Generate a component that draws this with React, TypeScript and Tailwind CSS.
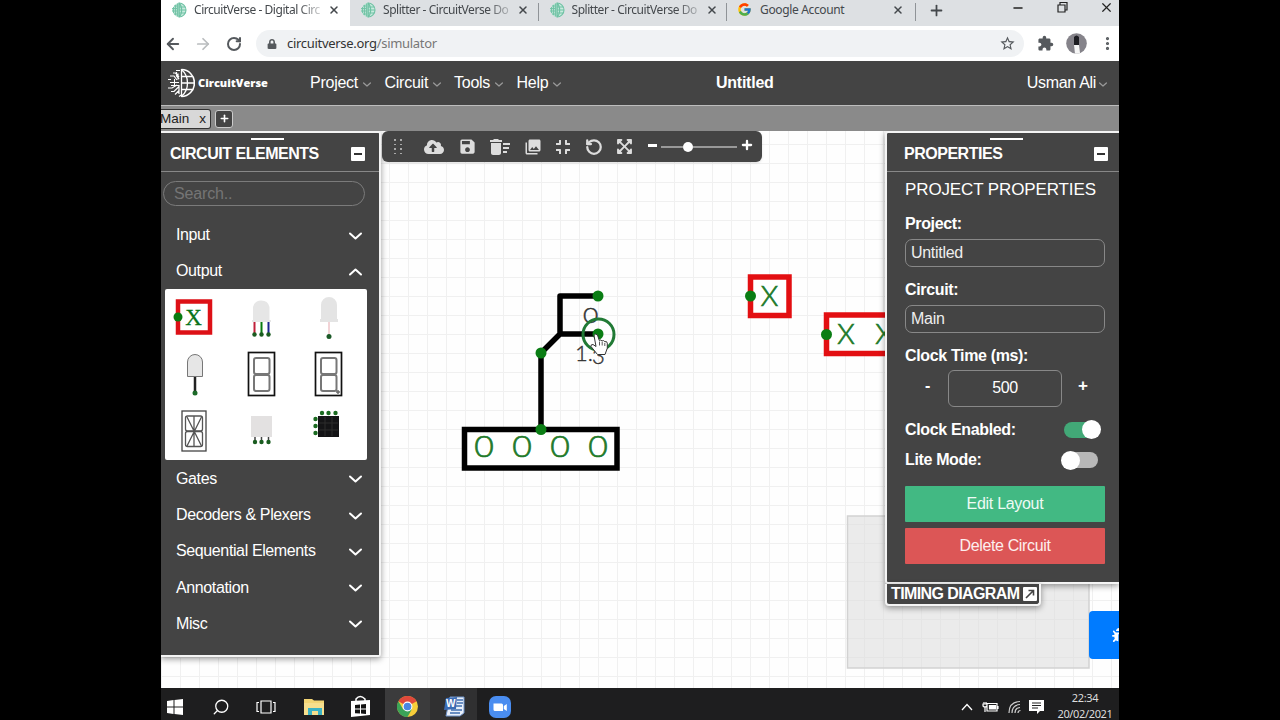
import React from 'react';
import { ArrowLeft, ArrowRight, Minus, MoreVertical, Plus, RotateCcw, RotateCw, Search, X } from 'lucide-react';
import { FaBug, FaCloudUploadAlt, FaCompress, FaExpandArrowsAlt, FaLock } from 'react-icons/fa';
import { FcGoogle } from 'react-icons/fc';
import { MdDeleteSweep, MdExtension, MdPhotoLibrary, MdSave, MdStarBorder } from 'react-icons/md';

const TABS = [
  { title: 'CircuitVerse - Digital Circ', active: true },
  { title: 'Splitter - CircuitVerse Do', active: false },
  { title: 'Splitter - CircuitVerse Do', active: false },
  { title: 'Google Account', active: false, google: true },
];

const MENUS = [
  { label: 'Project', width: 'w-[74.5px]' },
  { label: 'Circuit', width: 'w-[69.5px]' },
  { label: 'Tools', width: 'w-[62.5px]' },
  { label: 'Help', width: 'w-[60px]' },
];

const LOWER_SECTIONS = ['Gates', 'Decoders & Plexers', 'Sequential Elements', 'Annotation', 'Misc'];

const GlobeIcon = () => (
  <svg width="16" height="16" viewBox="0 0 16 16" fill="none" stroke="#6fc2a4" strokeWidth="1.1" className="shrink-0">
    <path d="M8 1a7 7 0 0 1 0 14z" fill="#c9ebdf" />
    <path d="M3.500 3Q8 0 8 1v14q-3 0-5-2.500L1 8z" fill="#b5e0d1" stroke="none" />
    <path d="M8 1v14M8 1c3.6 3.5 3.6 10.500 0 14M8 5h6.200M8 8h7M8 11h6.200" />
    <path d="M6.500 1.500v13M4.500 3v10M2.500 5v6M1 6.500h5M1 9h5M3 4h3M3 12h3" strokeWidth="0.900" />
  </svg>
);

// Small shallow arrow used in menus and accordions
const Chevron: React.FC<{ up?: boolean; small?: boolean; className?: string }> = ({ up, small, className = '' }) => (
  <svg
    width={small ? 8 : 13}
    height={small ? 5 : 8}
    viewBox="0 0 13 8"
    fill="none"
    stroke="currentColor"
    strokeWidth="2"
    strokeLinecap="round"
    strokeLinejoin="round"
    className={`shrink-0 ${up ? 'rotate-180' : ''} ${className}`}
  >
    <path d="M1 1.500l5.500 5 5.500-5" />
  </svg>
);

const Logo = () => (
  <svg width="28" height="30" viewBox="0 0 28 30" fill="none" stroke="#fff" strokeWidth="1.200">
    <path d="M14.500 1.500a12.700 13.300 0 0 1 0 27" strokeWidth="1.600" />
    <path d="M14.500 1v28M14.500 1.500c8 7 8 20 0 27M14.500 8.500h10.500M14.500 15h12.500M14.500 21.500h10.500" strokeWidth="1.300" />
    <path d="M11 5.500v6M12 17v9M9.500 4v4l2.500 3M9 2.500h4M6 5h2.500l3.500 4M3 8h4l3 4M1 11.500h3M3 14.500h9M4 17.500h8M1 20h4l5-3M4 23.500h3l5-5M8 26.500l4-4M12 28.500l3-2" />
    <path d="M7.500 11v8" strokeWidth="1" />
  </svg>
);

const BrowserTabs: React.FC = () => (
  <div className="flex h-[26px] shrink-0 bg-[#dde0e3] font-['Noto_Sans',sans-serif] text-[#44484c]">
    {TABS.map((tab, i) => (
      <div
        key={i}
        className={`flex h-[26px] items-start pt-[2px] pl-[10px] ${tab.active ? 'w-[189px] bg-white' : 'w-[188.500px]'}`}
      >
        {tab.google ? <FcGoogle size={15} className="shrink-0" /> : <GlobeIcon />}
        {tab.google ? (
          <span className="ml-[8px] h-4 w-[128px] text-[12px] leading-4 tracking-[-0.350px] whitespace-nowrap">{tab.title}</span>
        ) : (
          <span className="ml-[7px] h-4 w-[130px] text-[12px] leading-4 tracking-[-0.450px] whitespace-nowrap [mask-image:linear-gradient(to_right,black_104px,transparent_134px)]">
            {tab.title}
          </span>
        )}
        <X size={12} strokeWidth={3} className="mt-[2px] ml-1 shrink-0" />
        {!tab.active && <span className="mt-px ml-auto h-[18px] w-px bg-[#8f9397]" />}
      </div>
    ))}
    <Plus size={17} strokeWidth={2.500} className="mt-[2px] ml-[12px]" />
    <div className="ml-auto flex gap-[33px] pt-[1px] pr-[5px] text-[#222]">
      <Minus size={14} strokeWidth={2.200} className="-mr-[1px]" />
      <svg width="11" height="12" viewBox="0 0 11 12" fill="none" stroke="#222" strokeWidth="1.200">
        <path d="M1 4h7v7H1zM3 4V1.500h7V9H8" />
      </svg>
      <X size={15} strokeWidth={1.900} className="-mt-px -ml-[2px]" />
    </div>
  </div>
);

const AddressBar: React.FC = () => (
  <div className="flex h-[35px] shrink-0 items-center bg-white pl-[3px] text-[#55595d]">
    <ArrowLeft size={18} strokeWidth={2.500} />
    <ArrowRight size={18} strokeWidth={2.300} className="ml-[12px] text-[#b9bcbe]" />
    <RotateCw size={16} strokeWidth={3} className="ml-[14px]" />
    <div className="ml-[14px] flex h-[27px] w-[768px] items-center rounded-full bg-[#f0f2f4] pr-[8px] pl-[11px]">
      <FaLock size={10} />
      <span className="ml-[10px] font-['Noto_Sans',sans-serif] text-[13px] tracking-[-0.300px] text-[#777]">
        <span className="text-[#333]">circuitverse.org</span>/simulator
      </span>
      <MdStarBorder size={17} className="ml-auto" />
    </div>
    <MdExtension size={17} className="ml-[13px]" />
    <svg width="21" height="21" viewBox="0 0 21 21" className="ml-[12px]">
      <circle cx="10.500" cy="10.500" r="10.300" fill="#85838a" />
      <path d="M8 4q2.500-3 5 0v8H8z" fill="#1d1d22" />
      <path d="M8 12h5l1 8q-3 1-5 .5z" fill="#f5f5f5" />
    </svg>
    <MoreVertical size={17} strokeWidth={2.500} className="ml-[12px]" />
  </div>
);

const NavBar: React.FC = () => (
  <div className="flex h-[45px] shrink-0 items-center border-b border-[#bdbdbd] bg-[#444] text-[16px] tracking-[-0.250px] text-white">
    <div className="flex w-[149px] items-center pl-[6px]">
      <Logo />
      <span className="ml-[3px] font-['Open_Sans',sans-serif] text-[11px] font-extrabold tracking-normal">CircuitVerse</span>
    </div>
    {MENUS.map((menu) => (
      <div key={menu.label} className={`flex items-center gap-[5px] ${menu.width}`}>
        {menu.label}
        <Chevron small className="mt-[3px] text-[#999]" />
      </div>
    ))}
    <span className="ml-[139.500px] font-bold">Untitled</span>
    <div className="ml-auto flex items-center gap-[3px] pr-[12px]">
      <span className="-mt-px tracking-[-0.320px]">Usman Ali</span>
      <Chevron small className="mt-[3px] text-[#999]" />
    </div>
  </div>
);

const CircuitTabs: React.FC = () => (
  <div className="flex h-[25px] shrink-0 items-center gap-[4px] bg-[#8a8a8a] text-[13.500px]">
    <div className="flex h-[20px] w-[50px] items-center justify-between rounded-r-[3px] border border-l-0 border-[#333] bg-[#d8d8d8] pt-px pr-[4px] text-[#222]">
      <span className="-ml-px">Main</span>
      <span>x</span>
    </div>
    <div className="flex h-[18px] w-[18px] items-center justify-center rounded-[3px] border border-[#ccc] bg-[#444] text-white">
      <Plus size={11} strokeWidth={3.500} />
    </div>
  </div>
);

const PanelHeader: React.FC<{ title: string; className: string }> = ({ title, className }) => (
  <div className={`flex h-[39px] flex-col border-b border-[#888] ${className}`}>
    <div className="mt-[5px] h-[2px] w-[33px] self-center bg-white" />
    <div className="mt-[4px] flex items-center justify-between">
      <span className="text-[16px] leading-[20px] font-bold tracking-[-0.480px]">{title}</span>
      <span className="flex h-[14px] w-[14px] items-center justify-center rounded-[1px] bg-white">
        <span className="h-[2px] w-[8px] bg-[#333]" />
      </span>
    </div>
  </div>
);

const SectionRow: React.FC<{ label: string; open?: boolean }> = ({ label, open }) => (
  <div className="flex h-[36.200px] items-center justify-between pr-[17px] pl-[15px] text-[16px] tracking-[-0.380px]">
    {label}
    <Chevron up={open} className="mt-px" />
  </div>
);

// Output element previews, drawn on the 202x171 palette
const OutputPalette = () => (
  <svg width="202" height="171" viewBox="0 0 202 171" className="mb-[0.500px] ml-[4px] block rounded-[2px] bg-white" fill="none">
    <rect x="13" y="12.500" width="32" height="31" stroke="#dd1016" strokeWidth="4.500" />
    <circle cx="13" cy="28" r="4.500" fill="#087a10" />
    <text x="28.500" y="36" textAnchor="middle" fontSize="23" fill="#08731a" className="font-['Liberation_Serif',serif]" stroke="#08731a" strokeWidth="0.300">X</text>

    {/* RGB led */}
    <path d="M88 31V18a8.500 8.500 0 0 1 16.500 0v13h1.500v2H87v-2z" fill="#e6e6e6" />
    <path d="M89.500 33v12" stroke="#c0203a" strokeWidth="2" />
    <path d="M96.500 33v12" stroke="#087a10" strokeWidth="2" />
    <path d="M103.500 33v12" stroke="#1c2490" strokeWidth="2" />
    <g fill="#1a5c20">
      <circle cx="89.500" cy="45.500" r="2.200" /><circle cx="96.500" cy="45.500" r="2.200" /><circle cx="103.500" cy="45.500" r="2.200" />
    </g>

    {/* variable led */}
    <path d="M156 30V16a8 8 0 0 1 16 0v14h1v3h-18v-3z" fill="#e4e4e4" />
    <path d="M164 33v14" stroke="#f2d3d6" strokeWidth="2" />
    <circle cx="164" cy="47.500" r="2.500" fill="#1c5a28" />

    {/* digital led */}
    <path d="M22.500 87.500V73a7.500 7.500 0 0 1 15 0v14.500z" fill="#e6e6e6" stroke="#777" />
    <path d="M30 88v15" stroke="#222" strokeWidth="2.500" />
    <circle cx="30" cy="104" r="2.500" fill="#1c6a28" />

    {/* hex and seven segment displays */}
    <rect x="83.500" y="63.500" width="26" height="43" stroke="#111" strokeWidth="1.700" />
    <rect x="150.500" y="63.500" width="26" height="43" stroke="#111" strokeWidth="1.700" />
    <g stroke="#777" strokeWidth="2">
      <rect x="89" y="69" width="15.500" height="16" rx="2" />
      <rect x="89" y="86" width="15.500" height="16" rx="2" />
      <rect x="156" y="69" width="15.500" height="16" rx="2" />
      <rect x="156" y="86" width="15.500" height="16" rx="2" />
    </g>
    <circle cx="173" cy="103" r="1.300" stroke="#555" fill="#999" />

    {/* sixteen segment */}
    <rect x="17" y="122" width="24" height="40" stroke="#444" strokeWidth="1.300" />
    <g stroke="#555" strokeWidth="1.300">
      <rect x="20.500" y="127" width="17" height="15" rx="2" />
      <rect x="20.500" y="142.500" width="17" height="15" rx="2" />
      <path d="M29 127v30M22 128l14.500 29M36.500 128L22 157" />
    </g>

    <rect x="86" y="127" width="21" height="21" fill="#e3e1e1" />
    <path d="M90 148v6M96.500 148v6M103.500 148v6" stroke="#444" strokeWidth="1.500" />
    <g fill="#1a5c20">
      <circle cx="90" cy="153" r="2.200" /><circle cx="96.500" cy="153" r="2.200" /><circle cx="103.500" cy="153" r="2.200" />
    </g>

    {/* led matrix */}
    <rect x="153" y="127" width="21" height="21" fill="#141416" />
    <path d="M160 128v19M167 128v19M154 134h19M154 141h19" stroke="#2c2c2c" />
    <g fill="#1a6a20">
      <circle cx="157" cy="124" r="2.200" /><circle cx="163.500" cy="124" r="2.200" /><circle cx="170.500" cy="124" r="2.200" />
      <circle cx="150.500" cy="130" r="2.200" /><circle cx="150.500" cy="137" r="2.200" /><circle cx="150.500" cy="144" r="2.200" />
    </g>
  </svg>
);

const ElementsPanel: React.FC = () => (
  <div className="h-[526px] w-[220px] shrink-0 rounded-r-[3px] border-2 border-l-0 border-[#f4f4f4] bg-[#444] text-white shadow-[0_2px_6px_rgba(0,0,0,0.4)]">
    <PanelHeader title="CIRCUIT ELEMENTS" className="pr-[14px] pl-[9px]" />
    <div className="mt-[9px] ml-[2px] flex h-[25px] w-[202px] items-center rounded-full border border-[#7b7b7b] pl-[10px] text-[16px] tracking-[-0.150px] text-[#757575]">
      Search..
    </div>
    <div className="pt-[11px]">
      <SectionRow label="Input" />
      <SectionRow label="Output" open />
      <OutputPalette />
      {LOWER_SECTIONS.map((label) => (
        <SectionRow key={label} label={label} />
      ))}
    </div>
  </div>
);

const Toolbar: React.FC = () => (
  <div className="ml-px flex h-[31px] w-[380px] items-center rounded-[6px] bg-[#444] text-[#ddd] shadow-sm">
    <div className="ml-[12px] grid grid-cols-2 gap-x-[4px] gap-y-[3px]">
      {Array.from({ length: 8 }, (_, i) => (
        <span key={i} className="h-[1.500px] w-[2px] bg-[#aaa]" />
      ))}
    </div>
    <FaCloudUploadAlt size={20} className="ml-[22px]" />
    <MdSave size={19} className="ml-[14px]" />
    <MdDeleteSweep size={24} className="ml-[11px]" />
    <MdPhotoLibrary size={18} className="ml-[12px]" />
    <FaCompress size={16} className="ml-[13px]" />
    <RotateCcw size={18} strokeWidth={3} className="ml-[14px]" />
    <FaExpandArrowsAlt size={17} className="ml-[13px]" />
    <span className="mb-[2px] ml-[15px] h-[3px] w-[9px] bg-white" />
    <div className="ml-[4px] flex w-[76px] items-center">
      <span className="h-[2px] w-[22px] bg-[#999]" />
      <span className="h-[10px] w-[10px] rounded-full bg-white" />
      <span className="h-[2px] flex-1 bg-[#999]" />
    </div>
    <Plus size={14} strokeWidth={4} className="mb-[3px] ml-[3px] text-white" />
  </div>
);

const Field: React.FC<{ label: string; value: string }> = ({ label, value }) => (
  <div className="h-[66px]">
    <div className="text-[16px] leading-[20px] font-bold tracking-[-0.350px]">{label}</div>
    <div className="mt-[5px] flex h-[28px] items-center rounded-[7px] border border-[#888] pb-px pl-[5px] text-[16px] tracking-[-0.300px] text-[#eee]">
      {value}
    </div>
  </div>
);

const Toggle: React.FC<{ on?: boolean }> = ({ on }) => (
  <span className={`flex h-[16px] items-center rounded-full ${on ? 'w-[35px] justify-end bg-[#42a877]' : 'w-[34px] justify-start bg-[#b8b8b8]'}`}>
    <span className={`h-[19px] w-[19px] shrink-0 rounded-full bg-white ${on ? '-mr-[2px]' : '-ml-[3px]'}`} />
  </span>
);

const PropertiesPanel: React.FC = () => (
  <div className="flex w-[234px] flex-col items-start text-white">
    <div className="h-[453px] w-[234px] rounded-l-[3px] border-2 border-r-0 border-[#f4f4f4] bg-[#444] shadow-[0_2px_6px_rgba(0,0,0,0.4)]">
      <PanelHeader title="PROPERTIES" className="pr-[11px] pl-[17px]" />
      <div className="w-[218px] pl-[18px]">
        <div className="mt-[7px] mb-[13px] text-[17px] leading-[22px] tracking-[-0.120px] whitespace-nowrap">PROJECT PROPERTIES</div>
        <Field label="Project:" value="Untitled" />
        <Field label="Circuit:" value="Main" />
        <div className="h-[20px] text-[16px] leading-[20px] font-bold tracking-[-0.350px]">Clock Time (ms):</div>
        <div className="mt-[4px] flex h-[37px] items-center">
          <span className="mb-[5px] w-[43px] pl-[20px] text-[16px] font-bold">-</span>
          <span className="flex h-[37px] w-[114px] items-center justify-center rounded-[6px] border border-[#888] pb-px text-[16px] tracking-[-0.350px]">500</span>
          <span className="mb-[6px] ml-[16px] text-[17px] font-bold">+</span>
        </div>
        <div className="mt-[7px] flex h-[31px] items-center justify-between pr-[6px] text-[16px] font-bold tracking-[-0.350px]">
          Clock Enabled:
          <Toggle on />
        </div>
        <div className="flex h-[30px] items-center justify-between pr-[7px] text-[16px] font-bold tracking-[-0.350px]">
          Lite Mode:
          <Toggle />
        </div>
        <div className="mt-[11px] flex h-[36px] items-center justify-center rounded-[1px] bg-[#42b983] pb-px text-[16px] tracking-[-0.300px] text-[#eefaf4]">Edit Layout</div>
        <div className="mt-[6px] flex h-[36px] items-center justify-center rounded-[1px] bg-[#dc5656] pb-px text-[16px] tracking-[-0.350px] text-[#fdeeee]">Delete Circuit</div>
      </div>
    </div>
    <div className="flex h-[22px] w-[156px] items-center justify-between rounded-b-[4px] border-2 border-t-0 border-[#f4f4f4] bg-[#444] pr-[2px] pl-[4px] text-[16px] font-bold tracking-[-0.600px] whitespace-nowrap shadow-[0_2px_6px_rgba(0,0,0,0.4)]">
      TIMING DIAGRAM
      <svg width="14" height="14" viewBox="0 0 14 14">
        <rect width="14" height="14" rx="1" fill="#fff" />
        <path d="M3 11l7-7M5.500 3.500H10.500V8.500" stroke="#444" strokeWidth="1.600" fill="none" />
      </svg>
    </div>
  </div>
);

const CircuitCanvas = () => (
  <svg width="958" height="557" viewBox="161 131 958 557" className="absolute inset-0 font-['Lato',sans-serif]" fill="none">
    <defs>
      <pattern id="grid" x="161" y="144" width="19" height="19" patternUnits="userSpaceOnUse">
        <path d="M0.500 0v19M0 0.500h19" stroke="#f0f0f0" />
      </pattern>
    </defs>
    <rect x="161" y="131" width="958" height="557" fill="#fefefe" />
    <rect x="161" y="131" width="958" height="557" fill="url(#grid)" />

    {/* splitter and its wire */}
    <path d="M598 296H560V334H598M560 334L541 353V429" stroke="#000" strokeWidth="5.500" strokeLinejoin="round" />
    <rect x="464.500" y="429.500" width="152.500" height="38.500" fill="#fff" stroke="#000" strokeWidth="5.500" />
    <g fontSize="27" fill="#217a2a" textAnchor="middle" stroke="#217a2a" strokeWidth="0.600" className="font-light">
      <text transform="translate(484 457) scale(1.25 1.07)">0</text>
      <text transform="translate(522 457) scale(1.25 1.07)">0</text>
      <text transform="translate(560 457) scale(1.25 1.07)">0</text>
      <text transform="translate(598 457) scale(1.25 1.07)">0</text>
    </g>
    <g fontSize="22" fill="#333" stroke="#333" strokeWidth="0.400" className="font-light">
      <text transform="translate(583 323) scale(1.2 1)">0</text>
      <text x="575" y="361">1.</text>
      <text x="592" y="364">3</text>
    </g>
    <g fill="#0a7d14">
      <circle cx="598" cy="296" r="5.500" />
      <circle cx="598" cy="334" r="5.500" />
      <circle cx="541" cy="353" r="5.500" />
      <circle cx="541" cy="429.500" r="5.500" />
    </g>
    <circle cx="598.500" cy="334.500" r="15.500" stroke="#217a35" strokeWidth="3" />
    <path
      d="M595.500 335.500q1.500-2.500 3.500-.5l1.800 5.500q1.500-1.200 2.700.5 1.600-1.200 2.800.7 2.200-.8 2.500 1.500v5l-2.300 6.300h-7.500l-6.500-8q-.5-2.200 2-2l3 2z"
      transform="translate(-1.500 0)"
      fill="#fff"
      stroke="#333"
      strokeWidth="1"
    />
    <path d="M599.500 341.500v4M602.200 342v3.500M604.800 343v3" stroke="#333" strokeWidth="0.800" />

    {/* output probes */}
    <rect x="750.500" y="277" width="38.500" height="38.500" fill="#fff" stroke="#e30f12" strokeWidth="5.500" />
    <rect x="826.500" y="315" width="80" height="38.500" fill="#fff" stroke="#e30f12" strokeWidth="5.500" />
    <g fill="#217a2a" fontSize="28" textAnchor="middle" stroke="#217a2a" strokeWidth="0.700" className="font-light">
      <text x="769.500" y="306">X</text>
      <text x="846" y="344">X</text>
      <text x="884" y="344">X</text>
    </g>
    <circle cx="750.500" cy="296" r="5.500" fill="#0a7d14" />
    <circle cx="826.500" cy="334.500" r="5.500" fill="#0a7d14" />

    {/* minimap */}
    <rect x="847.500" y="516" width="241.500" height="152" fill="#dedede" fillOpacity="0.600" stroke="#d2d2d2" strokeWidth="1.500" />
  </svg>
);

const Simulator: React.FC = () => (
  <div className="relative h-[557px] shrink-0 overflow-hidden">
    <CircuitCanvas />
    <div className="relative flex items-start">
      <ElementsPanel />
      <Toolbar />
      <div className="ml-auto">
        <PropertiesPanel />
      </div>
    </div>
    <div className="absolute right-0 bottom-[29px] flex h-[48px] w-[30px] items-center overflow-hidden rounded-l-[4px] bg-[#007bff] pl-[23px] text-white">
      <FaBug size={14} className="shrink-0" />
    </div>
  </div>
);

const Taskbar: React.FC = () => (
  <div className="flex h-[32px] shrink-0 items-start bg-[#1e1e1f] text-white">
    <div className="flex h-[32px] w-[224px] items-center pt-[5px]">
      <svg width="16" height="16" viewBox="0 0 16 16" fill="#fff" className="ml-[6px]">
        <path d="M0 2l6.500-1v6.500H0zM7.500 1L16 0v7.500H7.500zM0 8.500h6.500V15L0 14zM7.500 8.500H16V16l-8.500-1z" />
      </svg>
      <Search size={18} strokeWidth={1.700} className="ml-[29px] -scale-x-100" />
      <svg width="20" height="14" viewBox="0 0 20 14" fill="none" stroke="#fff" strokeWidth="1.200" className="ml-[26px]">
        <path d="M5 1h10v12H5zM3 2.500H1v9h2M17 2.500h2v9h-2" />
      </svg>
      <svg width="21" height="18" viewBox="0 0 21 18" className="ml-[28px]">
        <path d="M0 1h8l2 1.500h10V17H0z" fill="#f3d574" />
        <path d="M0 5h20v12H0z" fill="#f7df8d" />
        <path d="M4 17v-7h14v7h-4v-4H8v4z" fill="#3bb2c4" />
      </svg>
      <svg width="20" height="22" viewBox="0 0 20 22" className="-mt-[2px] ml-[26px]">
        <path d="M5 6V4q4-5 9 0v3" fill="none" stroke="#fff" strokeWidth="1.500" />
        <path d="M0 6l19-1v15l-19 2z" fill="#fff" />
        <path d="M4 10l5-.5v4H4zM10 9.400l5-.4v4.500h-5zM4 14.500h5v4l-5-.3zM10 14.500h5v4.500l-5-.4z" fill="#111" />
      </svg>
    </div>
    <div className="flex h-[32px] w-[45px] items-center justify-center bg-[#3b3b3c] pt-[5px]">
      <svg width="21" height="21" viewBox="0 0 24 24">
        <circle cx="12" cy="12" r="12" fill="#f7cd3a" />
        <path d="M12 12L1.600 6A12 12 0 0 1 22.400 6z" fill="#e0483b" />
        <path d="M1.600 6A12 12 0 0 0 12 24l5-9H7z" fill="#3ba458" />
        <circle cx="12" cy="12" r="5.600" fill="#fff" />
        <circle cx="12" cy="12" r="4.400" fill="#4a86e0" />
      </svg>
    </div>
    <div className="flex h-[32px] w-[47px] items-center justify-center bg-[#303031] pt-[5px]">
      <svg width="22" height="21" viewBox="0 0 22 21">
        <path d="M7 1h14v16l-4 3H3z" fill="#e9f0fa" stroke="#6f93c8" />
        <path d="M14 4h6M14 7h6M13 10h6M8 14h11M7 17h10" stroke="#3f6db0" strokeWidth="1.300" />
        <path d="M3 2l11-1-1 12-12 1z" fill="#3c6cb4" />
        <text x="3" y="11" fontSize="10" fill="#fff" className="font-['Liberation_Sans',sans-serif] font-bold">W</text>
      </svg>
    </div>
    <div className="ml-[12px] flex h-[32px] items-center pt-[5px]">
      <svg width="22" height="22" viewBox="0 0 22 22">
        <rect width="22" height="22" rx="7" fill="#4a8df0" />
        <path d="M4.500 7.500h8q1.500 0 1.500 1.500v6H6q-1.500 0-1.500-1.500zM14.800 10l3-2v7l-3-2z" fill="#fff" />
      </svg>
    </div>
    <div className="ml-auto flex h-[32px] items-center pt-[5px]">
      <svg width="12" height="8" viewBox="0 0 12 8" fill="none" stroke="#fff" strokeWidth="1.300">
        <path d="M1 7l5-5.500L11 7" />
      </svg>
      <svg width="17" height="12" viewBox="0 0 17 12" fill="none" stroke="#fff" strokeWidth="1.200" className="ml-[9px]">
        <path d="M5 2.500h10v7.500H5zM16 5v3M1 3h4v2q-2 2-4 0zM3 6v5M2 1v2M4 1v2" />
        <path d="M7.500 4.500h6v3.500h-6z" fill="#fff" />
      </svg>
      <svg width="14" height="14" viewBox="0 0 14 14" fill="none" stroke="#ccc" strokeWidth="1.200" className="ml-[9px]">
        <path d="M1 13Q1 2 12 1.500M4 13q0-8 8-8.500M7 13q0-5 5-5.500M10 13q0-2.500 2.500-2.500" />
      </svg>
      <svg width="16" height="16" viewBox="0 0 16 16" className="ml-[7px]">
        <path d="M0 1h15v11h-4l-3 3v-3H0z" fill="#fff" />
        <path d="M3 4h9M3 6.500h9M3 9h6" stroke="#222" strokeWidth="1.200" />
      </svg>
    </div>
    <div className="mr-[5px] ml-[11px] flex w-[58px] flex-col items-center pt-[2px] font-['Noto_Sans',sans-serif] text-[11px] leading-[16px] tracking-[-0.350px] text-[#ddd]">
      <span>22:34</span>
      <span>20/02/2021</span>
    </div>
  </div>
);

export default function App() {
  return (
    <div className="h-[720px] w-[1280px] overflow-hidden bg-black">
      <div className="mx-auto flex h-[720px] w-[958px] flex-col overflow-hidden font-['Liberation_Sans',Arial,sans-serif]">
        <BrowserTabs />
        <AddressBar />
        <NavBar />
        <CircuitTabs />
        <Simulator />
        <Taskbar />
      </div>
    </div>
  );
}
